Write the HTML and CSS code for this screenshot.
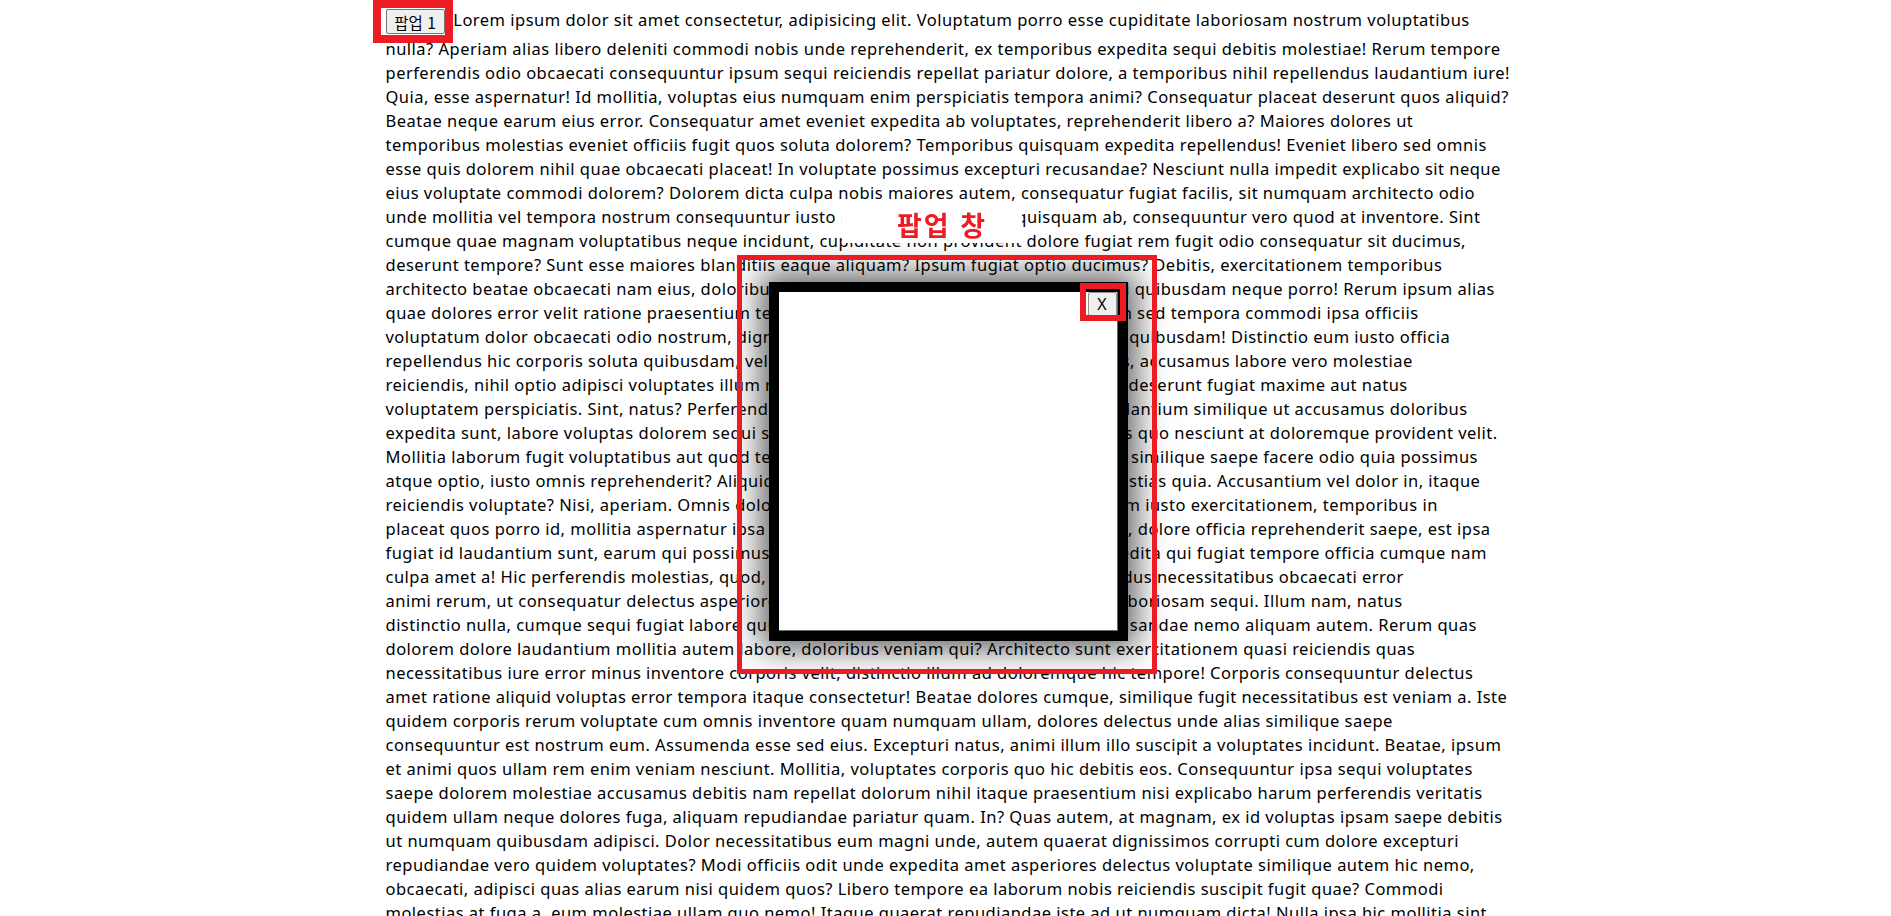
FILE: index.html
```html
<!DOCTYPE html>
<html lang="ko">
<head>
<meta charset="utf-8">
<title>팝업</title>
<link rel="stylesheet" href="styles.css">
</head>
<body>
<main class="page">
  <p class="article"><button class="open-btn" type="button">팝업 1</button> Lorem ipsum dolor sit amet consectetur, adipisicing elit. Voluptatum porro esse cupiditate laboriosam nostrum voluptatibus<br>
nulla? Aperiam alias libero deleniti commodi nobis unde reprehenderit, ex temporibus expedita sequi debitis molestiae! Rerum tempore<br>
perferendis odio obcaecati consequuntur ipsum sequi reiciendis repellat pariatur dolore, a temporibus nihil repellendus laudantium iure!<br>
Quia, esse aspernatur! Id mollitia, voluptas eius numquam enim perspiciatis tempora animi? Consequatur placeat deserunt quos aliquid?<br>
Beatae neque earum eius error. Consequatur amet eveniet expedita ab voluptates, reprehenderit libero a? Maiores dolores ut<br>
temporibus molestias eveniet officiis fugit quos soluta dolorem? Temporibus quisquam expedita repellendus! Eveniet libero sed omnis<br>
esse quis dolorem nihil quae obcaecati placeat! In voluptate possimus excepturi recusandae? Nesciunt nulla impedit explicabo sit neque<br>
eius voluptate commodi dolorem? Dolorem dicta culpa nobis maiores autem, consequatur fugiat facilis, sit numquam architecto odio<br>
unde mollitia vel tempora nostrum consequuntur iusto ratione eligendi, quo quisquam ab, consequuntur vero quod at inventore. Sint<br>
cumque quae magnam voluptatibus neque incidunt, cupiditate non provident dolore fugiat rem fugit odio consequatur sit ducimus,<br>
deserunt tempore? Sunt esse maiores blanditiis eaque aliquam? Ipsum fugiat optio ducimus? Debitis, exercitationem temporibus<br>
architecto beatae obcaecati nam eius, doloribus eveniet dolorem amet nemo tenetur quasi quibusdam neque porro! Rerum ipsum alias<br>
quae dolores error velit ratione praesentium tenetur, quas nihil fugit quibusdam numquam sed tempora commodi ipsa officiis<br>
voluptatum dolor obcaecati odio nostrum, dignissimos vero laborum quas sint tempora et quibusdam! Distinctio eum iusto officia<br>
repellendus hic corporis soluta quibusdam, vel facilis nisi iusto amet eligendi a temporibus, accusamus labore vero molestiae<br>
reiciendis, nihil optio adipisci voluptates illum rerum dolorum, perspiciatis veniet nesciunt deserunt fugiat maxime aut natus<br>
voluptatem perspiciatis. Sint, natus? Perferendis quibusdam tempora eos iste vel, quo laudantium similique ut accusamus doloribus<br>
expedita sunt, labore voluptas dolorem sequi saepe, odit iure explicabo aliquam voluptates quo nesciunt at doloremque provident velit.<br>
Mollitia laborum fugit voluptatibus aut quod tempora eius ducimus, nostrum veniam quos similique saepe facere odio quia possimus<br>
atque optio, iusto omnis reprehenderit? Aliquid nemo fugit consequatur, tenetur ipsa molestias quia. Accusantium vel dolor in, itaque<br>
reiciendis voluptate? Nisi, aperiam. Omnis dolorum facilis quos eligendi nihil sit, voluptatem iusto exercitationem, temporibus in<br>
placeat quos porro id, mollitia aspernatur ipsa nostrum doloribus minus qui dolor sit amet, dolore officia reprehenderit saepe, est ipsa<br>
fugiat id laudantium sunt, earum qui possimus repellat odio magnam quidem dolore, expedita qui fugiat tempore officia cumque nam<br>
culpa amet a! Hic perferendis molestias, quod, laudantium nisi ipsa velit voluptas repellendus necessitatibus obcaecati error<br>
animi rerum, ut consequatur delectus asperiores vitae molestias expedita dolor amet sit laboriosam sequi. Illum nam, natus<br>
distinctio nulla, cumque sequi fugiat labore quia ipsa tempora consequuntur nisi ante recusandae nemo aliquam autem. Rerum quas<br>
dolorem dolore laudantium mollitia autem labore, doloribus veniam qui? Architecto sunt exercitationem quasi reiciendis quas<br>
necessitatibus iure error minus inventore corporis velit, distinctio illum ad doloremque hic tempore! Corporis consequuntur delectus<br>
amet ratione aliquid voluptas error tempora itaque consectetur! Beatae dolores cumque, similique fugit necessitatibus est veniam a. Iste<br>
quidem corporis rerum voluptate cum omnis inventore quam numquam ullam, dolores delectus unde alias similique saepe<br>
consequuntur est nostrum eum. Assumenda esse sed eius. Excepturi natus, animi illum illo suscipit a voluptates incidunt. Beatae, ipsum<br>
et animi quos ullam rem enim veniam nesciunt. Mollitia, voluptates corporis quo hic debitis eos. Consequuntur ipsa sequi voluptates<br>
saepe dolorem molestiae accusamus debitis nam repellat dolorum nihil itaque praesentium nisi explicabo harum perferendis veritatis<br>
quidem ullam neque dolores fuga, aliquam repudiandae pariatur quam. In? Quas autem, at magnam, ex id voluptas ipsam saepe debitis<br>
ut numquam quibusdam adipisci. Dolor necessitatibus eum magni unde, autem quaerat dignissimos corrupti cum dolore excepturi<br>
repudiandae vero quidem voluptates? Modi officiis odit unde expedita amet asperiores delectus voluptate similique autem hic nemo,<br>
obcaecati, adipisci quas alias earum nisi quidem quos? Libero tempore ea laborum nobis reiciendis suscipit fugit quae? Commodi<br>
molestias at fuga a, eum molestiae ullam quo nemo! Itaque quaerat repudiandae iste ad ut numquam dicta! Nulla ipsa hic mollitia sint<br>
quod, ipsum dolores eveniet nobis velit repellat voluptate aspernatur quae, tempora ad!</p>
</main>

<div class="popup" role="dialog" aria-label="팝업 창">
  <div class="popup-frame">
    <button class="close-btn" type="button">X</button>
  </div>
</div>

<div class="note note-button" aria-hidden="true"></div>
<div class="note note-popup" aria-hidden="true"></div>
<div class="note note-close" aria-hidden="true"></div>
<div class="note-label">팝업 창</div>
</body>
</html>
```

FILE: styles.css
```css
html, body {
  margin: 0;
  padding: 0;
  background: #ffffff;
}

body {
  padding: 8px;
  font-family: "Noto Sans", "Noto Sans CJK KR", sans-serif;
  color: #000000;
}

.page {
  width: 1120px;
  margin: 0 auto;
}

.article {
  margin: 0;
  font-size: 16.5px;
  letter-spacing: 0.48px;
  line-height: 24px;
  white-space: nowrap;
}

.open-btn {
  display: inline-block;
  vertical-align: top;
  box-sizing: border-box;
  width: 59px;
  height: 25px;
  margin: 1px 4px 3px 0;
  padding: 0;
  font-family: "Noto Sans CJK KR", "Noto Sans", sans-serif;
  font-size: 15.5px;
  letter-spacing: 0;
  line-height: 22px;
  color: #000;
  background: #efefef;
  border: 1px solid #767676;
  border-radius: 2px;
}

.popup {
  position: fixed;
  top: 282px;
  left: calc(50% - 177px);
  width: 339px;
  height: 339px;
  border: 10px solid #000000;
  background: #ffffff;
  box-shadow: 0 0 30px 8px rgba(0, 0, 0, 0.62);
  z-index: 10;
}

.popup-frame {
  box-sizing: border-box;
  height: 100%;
  display: flex;
  justify-content: flex-end;
  align-items: flex-start;
  border-right: 1px solid #6a6a6a;
  border-bottom: 1px solid #6a6a6a;
  background: #ffffff;
}

.close-btn {
  box-sizing: border-box;
  width: 29px;
  height: 24px;
  padding: 0;
  font-family: "Noto Sans", sans-serif;
  font-size: 16px;
  line-height: 22px;
  color: #000;
  background: #efefef;
  border: 1px solid #8f8f8f;
  border-radius: 2px;
}

.note {
  position: absolute;
  box-sizing: border-box;
  border-style: solid;
  border-color: #ed1c24;
  z-index: 20;
}

.note-button {
  top: 0;
  left: 373px;
  width: 80px;
  height: 43px;
  border-width: 8px;
}

.note-popup {
  top: 255px;
  left: 737px;
  width: 420px;
  height: 419px;
  border-width: 5px;
}

.note-close {
  top: 283px;
  left: 1080px;
  width: 46px;
  height: 38px;
  border-width: 6px;
}

.note-label {
  position: absolute;
  top: 209px;
  left: 842px;
  width: 180px;
  height: 34px;
  box-sizing: border-box;
  padding-left: 55px;
  background: #ffffff;
  color: #ed1c24;
  font-family: "Noto Sans CJK KR", sans-serif;
  font-size: 27px;
  font-weight: 700;
  letter-spacing: 2px;
  line-height: 32px;
  z-index: 20;
}
```
